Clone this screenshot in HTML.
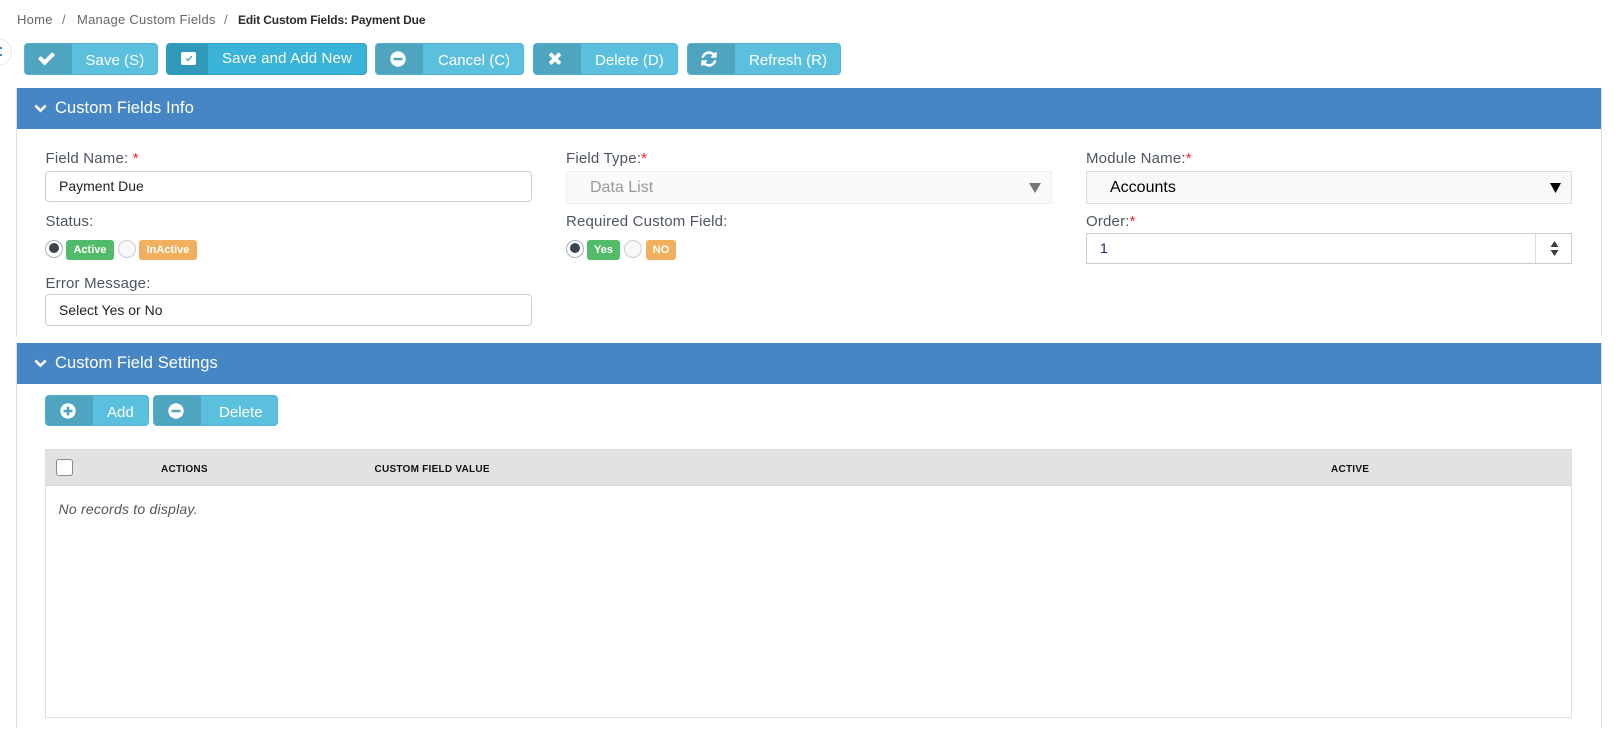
<!DOCTYPE html>
<html lang="en">
<head>
<meta charset="utf-8">
<title>Edit Custom Fields</title>
<style>
html,body{margin:0;padding:0;background:#fff;width:1622px;height:735px;overflow:hidden}
body{position:relative;font-family:"Liberation Sans",Arial,sans-serif;-webkit-font-smoothing:antialiased}
.a,.t,.b,.i,.ic{position:absolute;box-sizing:border-box}
.t{white-space:nowrap}
.crumb{font-size:13px;line-height:18px;top:11px;color:#666;letter-spacing:.25px}
.btn{position:absolute;box-sizing:border-box;top:43px;height:32px;background:#5bc0de;border:1px solid #51b5d6;border-radius:4px;overflow:hidden}
.btn .s{position:absolute;left:0;top:0;bottom:0;width:47px;background:#4fa4bf}
.btn.on{background:#39b3d7;border-color:#2d9fc3}
.btn.on .s{background:#3098b9;width:41px}
.btn .l{position:absolute;top:2px;line-height:30px;font-size:15px;color:#fff;white-space:nowrap;letter-spacing:.05px}
.ic{fill:#fff}
.hd{position:absolute;left:17px;width:1584px;height:41px;background:#4786c5}
.hd .h{position:absolute;left:38px;top:0;line-height:41px;font-size:16.5px;color:#fff;white-space:nowrap;letter-spacing:.07px}
.lb{font-size:15px;line-height:20px;color:#4d5560;letter-spacing:.18px}
.lb i{font-style:normal;color:#f0232a}
.in{position:absolute;box-sizing:border-box;background:#fff;border:1px solid #ccc;border-radius:4px;font-size:14px;color:#222;padding-left:13px;white-space:nowrap}
.sel{position:absolute;box-sizing:border-box;font-size:16px;line-height:31px;white-space:nowrap}
.rad{position:absolute;box-sizing:border-box;top:240px;width:18px;height:18px;border-radius:50%;border:1px solid #c8ccd2;background:#f8f8f8}
.rad.c{border-color:#aab2bd;background:#fff}
.rad.c:after{content:"";position:absolute;left:3px;top:2px;width:10px;height:10px;border-radius:50%;background:#3c4550}
.bd{position:absolute;top:240px;height:20px;border-radius:3px;color:#fff;font-size:11px;font-weight:bold;line-height:20px;text-align:center}
.g{background:#52bb69}.o{background:#f1b05d}
.th{font-size:10px;font-weight:bold;line-height:14px;top:463px;color:#111;letter-spacing:.25px}
</style>
</head>
<body>
<svg width="0" height="0" style="position:absolute">
<defs>
<symbol id="chk" viewBox="0 0 1792 1792"><path d="M1671 566q0 40-28 68l-724 724-136 136q-28 28-68 28t-68-28l-136-136-362-362q-28-28-28-68t28-68l136-136q28-28 68-28t68 28l294 295 656-657q28-28 68-28t68 28l136 136q28 28 28 68z"/></symbol>
<symbol id="min" viewBox="0 0 1792 1792"><path d="M1344 960v-128q0-26-19-45t-45-19h-768q-26 0-45 19t-19 45v128q0 26 19 45t45 19h768q26 0 45-19t19-45zm320-64q0 209-103 385.5t-279.5 279.5-385.5 103-385.5-103-279.5-279.5-103-385.5 103-385.5 279.5-279.5 385.5-103 385.5 103 279.5 279.5 103 385.5z"/></symbol>
<symbol id="pls" viewBox="0 0 1792 1792"><path d="M1344 960v-128q0-26-19-45t-45-19h-256v-256q0-26-19-45t-45-19h-128q-26 0-45 19t-19 45v256h-256q-26 0-45 19t-19 45v128q0 26 19 45t45 19h256v256q0 26 19 45t45 19h128q26 0 45-19t19-45v-256h256q26 0 45-19t19-45zm320-64q0 209-103 385.5t-279.5 279.5-385.5 103-385.5-103-279.5-279.5-103-385.5 103-385.5 279.5-279.5 385.5-103 385.5 103 279.5 279.5 103 385.5z"/></symbol>
<symbol id="tim" viewBox="0 0 1792 1792"><path d="M1490 1322q0 40-28 68l-136 136q-28 28-68 28t-68-28l-294-294-294 294q-28 28-68 28t-68-28l-136-136q-28-28-28-68t28-68l294-294-294-294q-28-28-28-68t28-68l136-136q28-28 68-28t68 28l294 294 294-294q28-28 68-28t68 28l136 136q28 28 28 68t-28 68l-294 294 294 294q28 28 28 68z"/></symbol>
<symbol id="ref" viewBox="0 0 1792 1792"><path d="M1639 1056q0 5-1 7-64 268-268 434.5t-478 166.5q-146 0-282.5-55t-243.5-157l-129 129q-19 19-45 19t-45-19-19-45v-448q0-26 19-45t45-19h448q26 0 45 19t19 45-19 45l-137 137q71 66 161 102t187 36q134 0 250-65t186-179q11-17 53-117 8-23 30-23h192q13 0 22.5 9.5t9.5 22.5zm25-800v448q0 26-19 45t-45 19h-448q-26 0-45-19t-19-45 19-45l138-138q-148-137-349-137-134 0-250 65t-186 179q-11 17-53 117-8 23-30 23h-199q-13 0-22.5-9.5t-9.5-22.5v-7q65-268 270-434.5t480-166.5q146 0 284 55.5t245 156.5l130-129q19-19 45-19t45 19 19 45z"/></symbol>
</defs>
</svg>

<!-- breadcrumb -->
<div class="t crumb" style="left:17px">Home</div>
<div class="t crumb" style="left:62px;color:#777">/</div>
<div class="t crumb" style="left:77px">Manage Custom Fields</div>
<div class="t crumb" style="left:224px;color:#777">/</div>
<div class="t crumb" style="left:238px;color:#2b2b2b;font-weight:bold;font-size:12px;letter-spacing:-.15px">Edit Custom Fields: Payment Due</div>

<!-- side toggle -->
<div class="a" style="left:-16px;top:38px;width:28px;height:28px;border-radius:50%;border:1px solid #e6e6e6;background:#fff"></div>
<div class="a" style="left:0;top:47px;width:2px;height:2px;background:#4786c5"></div>
<div class="a" style="left:0;top:54px;width:2px;height:2px;background:#4786c5"></div>

<!-- toolbar -->
<div class="btn" style="left:24px;width:134px"><div class="s"></div><div class="l" style="left:60.5px">Save (S)</div></div>
<svg class="ic" style="left:37px;top:49px" width="19" height="19"><use href="#chk"/></svg>

<div class="btn on" style="left:166px;width:201px"><div class="s"></div><div class="l" style="left:55px;top:0;letter-spacing:.15px">Save and Add New</div></div>
<div class="a" style="left:181px;top:52px;width:15px;height:13px;background:#fff;border-radius:2px"></div>
<svg class="a" style="left:185px;top:55px" width="8" height="7" viewBox="0 0 8 7"><path d="M1 3.5 3 5.5 7 1" fill="none" stroke="#3098b9" stroke-width="1.2"/></svg>

<div class="btn" style="left:375px;width:149px"><div class="s"></div><div class="l" style="left:62px">Cancel (C)</div></div>
<svg class="ic" style="left:389px;top:50px" width="18" height="18"><use href="#min"/></svg>

<div class="btn" style="left:533px;width:145px"><div class="s"></div><div class="l" style="left:61px">Delete (D)</div></div>
<svg class="ic" style="left:546px;top:49px" width="18" height="18"><use href="#tim"/></svg>

<div class="btn" style="left:687px;width:154px"><div class="s"></div><div class="l" style="left:61px">Refresh (R)</div></div>
<svg class="ic" style="left:700px;top:50px" width="18" height="18"><use href="#ref"/></svg>

<!-- panel 1 -->
<div class="a" style="left:16px;top:88px;width:1px;height:248px;background:#ddd"></div>
<div class="a" style="left:1601px;top:88px;width:1px;height:248px;background:#ddd"></div>
<div class="hd" style="top:88px">
  <svg class="a" style="left:17px;top:16px" width="13" height="9" viewBox="0 0 13 9"><path d="M1.3 1.5 6.5 6.7 11.7 1.5" fill="none" stroke="#fff" stroke-width="2.6"/></svg>
  <div class="h">Custom Fields Info</div>
</div>

<div class="t lb" style="left:45.5px;top:149px">Field Name: <i>*</i></div>
<div class="in" style="left:45px;top:171px;width:487px;height:31px;line-height:28px">Payment Due</div>
<div class="t lb" style="left:45.5px;top:212px">Status:</div>
<div class="rad c" style="left:45px"></div>
<div class="bd g" style="left:66px;width:48px">Active</div>
<div class="rad" style="left:118px"></div>
<div class="bd o" style="left:139px;width:58px">InActive</div>
<div class="t lb" style="left:45.5px;top:274px">Error Message:</div>
<div class="in" style="left:45px;top:294px;width:487px;height:32px;line-height:31px">Select Yes or No</div>

<div class="t lb" style="left:566px;top:149px">Field Type:<i>*</i></div>
<div class="sel" style="left:566px;top:171px;width:486px;height:33px;background:#fafafa;border:1px solid #eee;color:#999;padding-left:23px">Data List</div>
<svg class="a" style="left:1029px;top:183px" width="12" height="10"><path d="M0 0H12L6 10Z" fill="#777"/></svg>
<div class="t lb" style="left:566px;top:212px">Required Custom Field:</div>
<div class="rad c" style="left:566px"></div>
<div class="bd g" style="left:587px;width:33px">Yes</div>
<div class="rad" style="left:624px"></div>
<div class="bd o" style="left:646px;width:30px">NO</div>

<div class="t lb" style="left:1086px;top:149px">Module Name:<i>*</i></div>
<div class="sel" style="left:1086px;top:171px;width:486px;height:33px;background:#f8f8f8;border:1px solid #ddd;color:#000;padding-left:23px">Accounts</div>
<svg class="a" style="left:1550px;top:183px" width="11" height="10"><path d="M0 0H11L5.5 10Z" fill="#000"/></svg>
<div class="t lb" style="left:1086px;top:212px">Order:<i>*</i></div>
<div class="a" style="left:1086px;top:233px;width:486px;height:31px;border:1px solid #ccc;background:#fff;font-size:14px;line-height:29px;padding-left:13px;color:#24246e">1</div>
<div class="a" style="left:1535px;top:234px;width:1px;height:29px;background:#ddd"></div>
<svg class="a" style="left:1550px;top:241px" width="9" height="16"><path d="M4.5 0 8.5 6H.5ZM.5 9H8.5L4.5 15Z" fill="#3a3a3a"/></svg>

<!-- panel 2 -->
<div class="a" style="left:16px;top:343px;width:1px;height:385px;background:#ddd"></div>
<div class="a" style="left:1601px;top:343px;width:1px;height:385px;background:#ddd"></div>
<div class="hd" style="top:343px">
  <svg class="a" style="left:17px;top:16px" width="13" height="9" viewBox="0 0 13 9"><path d="M1.3 1.5 6.5 6.7 11.7 1.5" fill="none" stroke="#fff" stroke-width="2.6"/></svg>
  <div class="h">Custom Field Settings</div>
</div>

<div class="btn" style="left:45px;top:395px;height:31px;width:104px"><div class="s"></div><div class="l" style="left:61px;line-height:30px">Add</div></div>
<svg class="ic" style="left:59px;top:402px" width="18" height="18"><use href="#pls"/></svg>
<div class="btn" style="left:153px;top:395px;height:31px;width:125px"><div class="s"></div><div class="l" style="left:65px;line-height:30px">Delete</div></div>
<svg class="ic" style="left:167px;top:402px" width="18" height="18"><use href="#min"/></svg>

<div class="a" style="left:45px;top:449px;width:1527px;height:269px;border:1px solid #ddd;background:#fff"></div>
<div class="a" style="left:45px;top:449px;width:1527px;height:37px;background:#e2e2e2;border:1px solid #dcdcdc"></div>
<div class="a" style="left:56px;top:459px;width:17px;height:17px;background:#fff;border:1px solid #8a8a8a;border-radius:3px"></div>
<div class="t th" style="left:161px">ACTIONS</div>
<div class="t th" style="left:374.5px">CUSTOM FIELD VALUE</div>
<div class="t th" style="left:1331px">ACTIVE</div>
<div class="t" style="left:58.5px;top:500px;font-size:14px;line-height:18px;font-style:italic;color:#555;letter-spacing:.22px">No records to display.</div>
</body>
</html>
